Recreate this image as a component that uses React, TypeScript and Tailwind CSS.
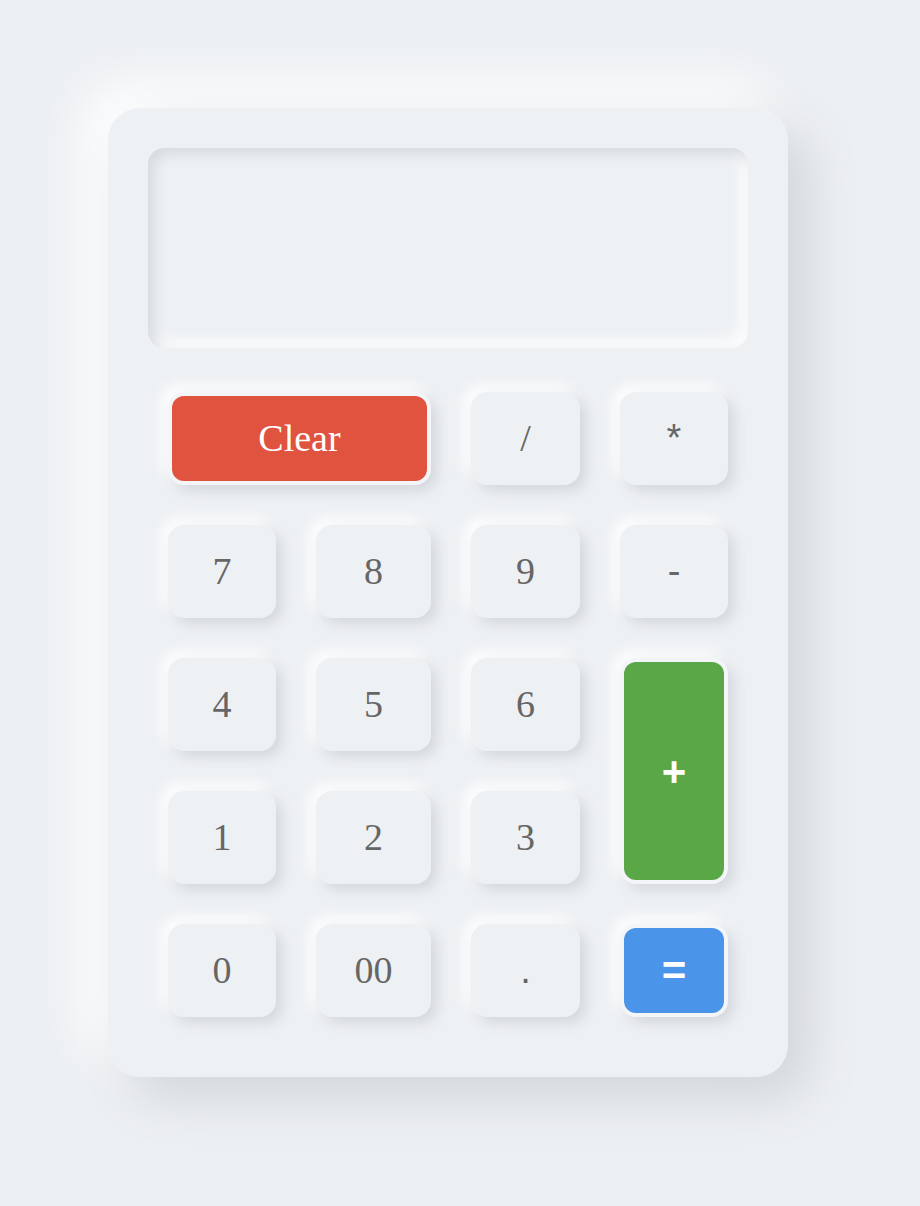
import React from "react";

type Key = {
  label: string;
  area: string;
  tone?: "plain" | "red" | "green" | "blue";
  serif?: boolean;
};

const keys: Key[] = [
  { label: "Clear", area: "col-span-2", tone: "red", serif: true },
  { label: "/", area: "", serif: true },
  { label: "*", area: "" },
  { label: "7", area: "", serif: true },
  { label: "8", area: "", serif: true },
  { label: "9", area: "", serif: true },
  { label: "-", area: "" },
  { label: "4", area: "", serif: true },
  { label: "5", area: "", serif: true },
  { label: "6", area: "", serif: true },
  { label: "+", area: "row-span-2", tone: "green" },
  { label: "1", area: "", serif: true },
  { label: "2", area: "", serif: true },
  { label: "3", area: "", serif: true },
  { label: "0", area: "", serif: true },
  { label: "00", area: "", serif: true },
  { label: ".", area: "" },
  { label: "=", area: "", tone: "blue" },
];

const toneClass = {
  red: "bg-[#e0533f] text-white text-[38px]",
  green: "bg-[#5aa748] text-white font-bold text-[42px]",
  blue: "bg-[#4a94e9] text-white font-bold text-[42px]",
};

function CalcKey({ k }: { k: Key }) {
  const font = k.serif
    ? "font-['Liberation_Serif',serif]"
    : "font-['Liberation_Sans',Arial,sans-serif]";

  if (k.tone && k.tone !== "plain") {
    return (
      <button
        className={`${k.area} rounded-2xl border-4 border-[#f3f5f8] bg-[#f3f5f8] shadow-[6px_6px_14px_#d3d7dc,-6px_-6px_14px_#ffffff]`}
      >
        <span
          className={`flex h-full w-full items-center justify-center rounded-xl ${font} ${toneClass[k.tone]}`}
        >
          {k.label}
        </span>
      </button>
    );
  }

  return (
    <button
      className={`${k.area} flex items-center justify-center rounded-2xl bg-[#eef1f4] text-[38px] text-[#666666] shadow-[6px_6px_14px_#d3d7dc,-6px_-6px_14px_#ffffff] ${font}`}
    >
      {k.label}
    </button>
  );
}

export default function App() {
  return (
    <div className="min-h-[1206px] w-full bg-[#edf0f3] pl-[108px] pt-[108px]">
      <div className="w-[680px] rounded-[32px] bg-[#eef1f4] p-10 pb-[60px] shadow-[22px_22px_50px_#d2d6db,-22px_-22px_50px_#ffffff]">
        <div className="h-[200px] w-full rounded-2xl bg-[#eef1f4] shadow-[inset_6px_6px_14px_#d6dade,inset_-6px_-6px_14px_#ffffff]" />
        <div className="mt-[44px] grid grid-cols-[108px_115px_109px_108px] grid-rows-[repeat(5,93px)] gap-10 px-5">
          {keys.map((k) => (
            <CalcKey key={k.label} k={k} />
          ))}
        </div>
      </div>
    </div>
  );
}
